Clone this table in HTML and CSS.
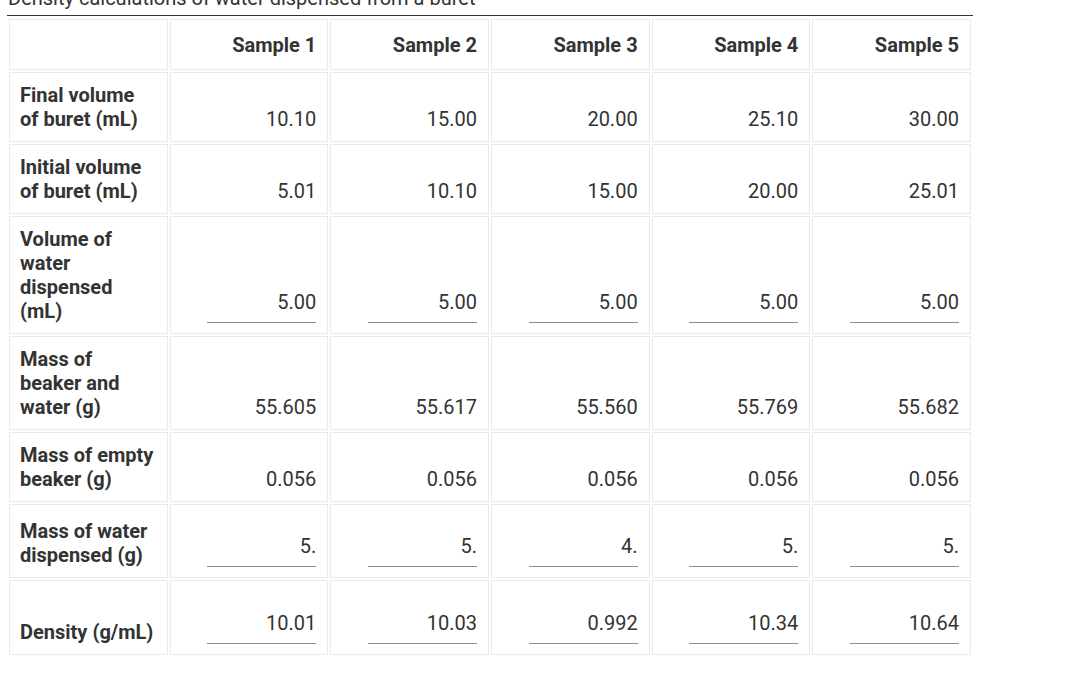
FILE: index.html
```html
<!DOCTYPE html>
<html lang="en">
<head>
<meta charset="utf-8">
<title>Density calculations</title>
<link rel="stylesheet" href="styles.css">
</head>
<body>
<div class="page">
  <h2 class="caption">Density calculations of water dispensed from a buret</h2>
  <table class="grid">
    <thead>
      <tr>
        <th class="corner"></th>
        <th>Sample 1</th>
        <th>Sample 2</th>
        <th>Sample 3</th>
        <th>Sample 4</th>
        <th>Sample 5</th>
      </tr>
    </thead>
    <tbody>
      <tr>
        <th class="label">Final volume<br>of buret (mL)</th>
        <td>10.10</td><td>15.00</td><td>20.00</td><td>25.10</td><td>30.00</td>
      </tr>
      <tr>
        <th class="label">Initial volume<br>of buret (mL)</th>
        <td>5.01</td><td>10.10</td><td>15.00</td><td>20.00</td><td>25.01</td>
      </tr>
      <tr>
        <th class="label">Volume of<br>water<br>dispensed<br>(mL)</th>
        <td><div class="field">5.00</div></td>
        <td><div class="field">5.00</div></td>
        <td><div class="field">5.00</div></td>
        <td><div class="field">5.00</div></td>
        <td><div class="field">5.00</div></td>
      </tr>
      <tr>
        <th class="label">Mass of<br>beaker and<br>water (g)</th>
        <td>55.605</td><td>55.617</td><td>55.560</td><td>55.769</td><td>55.682</td>
      </tr>
      <tr>
        <th class="label">Mass of empty<br>beaker (g)</th>
        <td>0.056</td><td>0.056</td><td>0.056</td><td>0.056</td><td>0.056</td>
      </tr>
      <tr>
        <th class="label">Mass of water<br>dispensed (g)</th>
        <td><div class="field">5.</div></td>
        <td><div class="field">5.</div></td>
        <td><div class="field">4.</div></td>
        <td><div class="field">5.</div></td>
        <td><div class="field">5.</div></td>
      </tr>
      <tr class="last">
        <th class="label">Density (g/mL)</th>
        <td><div class="field">10.01</div></td>
        <td><div class="field">10.03</div></td>
        <td><div class="field">0.992</div></td>
        <td><div class="field">10.34</div></td>
        <td><div class="field">10.64</div></td>
      </tr>
    </tbody>
  </table>
</div>
</body>
</html>
```
FILE: styles.css
```css
html, body {
  margin: 0;
  padding: 0;
  background: #ffffff;
}

body {
  font-family: Roboto, "Liberation Sans", Arial, sans-serif;
  color: #333333;
  overflow: hidden;
}

.page {
  padding: 0 7px;
  width: 966px;
}

.caption {
  margin: -16px 0 0 0;
  padding: 0 0 3px 1px;
  height: 28px;
  font-size: 20px;
  line-height: 28px;
  font-weight: 400;
  color: #333333;
  border-bottom: 1px solid #333333;
}

.grid {
  width: 966px;
  table-layout: fixed;
  border-collapse: separate;
  border-spacing: 2px;
  margin-top: 1px;
  font-size: 20px;
  line-height: 24px;
  color: #333333;
}

.grid th,
.grid td {
  border: 1px solid #eceae5;
  padding: 10px 11px 10px 10px;
  text-align: right;
  vertical-align: bottom;
}

.grid thead th {
  padding-top: 13px;
  padding-bottom: 12px;
  font-weight: 700;
}

.grid th.label {
  text-align: left;
  font-weight: 700;
}

.grid td {
  font-weight: 400;
}

.field {
  width: 109px;
  height: 43px;
  margin-left: auto;
  padding-bottom: 8px;
  border-bottom: 1px solid #8e8e8e;
  display: flex;
  align-items: flex-end;
  justify-content: flex-end;
}

.last .field {
  height: 44px;
}
```
